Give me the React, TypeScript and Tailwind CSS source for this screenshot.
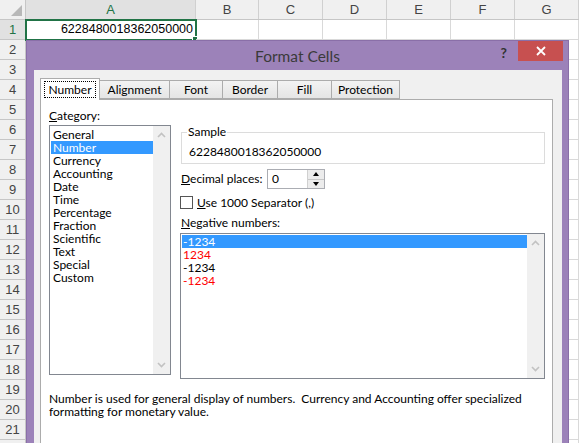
import React from 'react';

const cols = [
  { l: 'A', w: 'w-[170px]' },
  { l: 'B', w: 'w-[63px]' },
  { l: 'C', w: 'w-[64px]' },
  { l: 'D', w: 'w-[64px]' },
  { l: 'E', w: 'w-[64px]' },
  { l: 'F', w: 'w-[64px]' },
  { l: 'G', w: 'w-[64px]' },
];

const rows = Array.from({ length: 22 }, (_, i) => i + 1);

const categories = [
  'General', 'Number', 'Currency', 'Accounting', 'Date', 'Time',
  'Percentage', 'Fraction', 'Scientific', 'Text', 'Special', 'Custom',
];

const negatives = [
  { t: '-1234', c: 'text-white bg-[#3399ff]' },
  { t: '1234', c: 'text-[#ff0000]' },
  { t: '-1234', c: 'text-black' },
  { t: '-1234', c: 'text-[#ff0000]' },
];

const tabs = [
  { t: 'Alignment', w: 'w-[70px]' },
  { t: 'Font', w: 'w-[53px]' },
  { t: 'Border', w: 'w-[55px]' },
  { t: 'Fill', w: 'w-[54px]' },
  { t: 'Protection', w: 'w-[68px]' },
];

const Chevron = ({ down }: { down?: boolean }) => (
  <svg width="9" height="6" viewBox="0 0 9 6">
    <polyline
      points={down ? '1,1 4.5,4.5 8,1' : '1,5 4.5,1.5 8,5'}
      fill="none"
      stroke="#c2c2c2"
      strokeWidth="1.6"
    />
  </svg>
);

const Scrollbar = () => (
  <div className="w-[17px] shrink-0 bg-[#f0f0f0] flex flex-col items-center justify-between py-[6px]">
    <Chevron />
    <Chevron down />
  </div>
);

export default function App() {
  return (
    <div className="relative w-[579px] h-[443px] overflow-hidden bg-white font-['Liberation_Sans',sans-serif]">
      {/* column headers */}
      <div className="flex h-[20px] bg-[#f0f0f0] border-b border-[#c6c6c6]">
        <div className="w-[26px] shrink-0 border-r border-[#c6c6c6] flex items-end justify-end p-[3px]">
          <div className="w-0 h-0 border-l-[11px] border-l-transparent border-b-[11px] border-b-[#b8b8b8]" />
        </div>
        {cols.map((c) => (
          <div
            key={c.l}
            className={`${c.w} shrink-0 border-r border-[#d0d0d0] flex items-center justify-center text-[13px] ${
              c.l === 'A' ? 'bg-[#e1e1e1] text-[#217346]' : 'text-[#444]'
            }`}
          >
            {c.l}
          </div>
        ))}
      </div>

      {/* rows */}
      {rows.map((r) => (
        <div key={r} className="flex h-[20px]">
          <div
            className={`w-[26px] shrink-0 border-r border-b border-[#c6c6c6] flex items-center justify-center text-[13px] ${
              r === 1 ? 'bg-[#e1e1e1] text-[#217346]' : 'bg-[#f0f0f0] text-[#444]'
            }`}
          >
            {r}
          </div>
          {cols.map((c) => (
            <div key={c.l} className={`${c.w} shrink-0 border-r border-b border-[#d9d9d9] relative`}>
              {r === 1 && c.l === 'A' && (
                <>
                  <div className="h-full flex items-center justify-end pr-[2px] text-[12.5px] text-black">
                    6228480018362050000
                  </div>
                  <div className="absolute -left-[1px] -top-[1px] w-[172px] h-[22px] border-2 border-[#217346]" />
                  <div className="absolute -right-[3px] -bottom-[3px] w-[6px] h-[6px] bg-[#217346] border border-white" />
                </>
              )}
            </div>
          ))}
        </div>
      ))}

      {/* Format Cells dialog */}
      <div className="absolute left-[26px] top-[40px] w-[543px] h-[420px] bg-[#9c82b9] border border-[#8a6fa8] flex flex-col font-['Lato',sans-serif] text-[12px] text-black">
        <div className="h-[29px] shrink-0 grid grid-cols-[1fr_auto_1fr]">
          <div />
          <div className="pt-[4px] text-[15.5px] text-[#3a3a3a]">Format Cells</div>
          <div className="flex justify-end items-start pr-[5px]">
            <span className="mt-[1px] mr-[11px] font-bold text-[14px] text-[#333]">?</span>
            <div className="w-[45px] h-[20px] bg-[#c75050] flex items-center justify-center">
              <svg width="10" height="10" viewBox="0 0 10 10">
                <path d="M1 1 L9 9 M9 1 L1 9" stroke="white" strokeWidth="1.8" />
              </svg>
            </div>
          </div>
        </div>

        <div className="flex-1 ml-[7px] mr-[6px] bg-[#f0f0f0] pt-[8px] pl-[6px] pr-[9px] flex flex-col">
          {/* tabs */}
          <div className="flex items-end h-[21px]">
            <div className="w-[60px] h-[22px] bg-white border border-b-0 border-[#acacac] -mb-[1px] z-10 flex items-center justify-center px-[3px] py-[2px]">
              <div className="w-full h-full border border-dotted border-black flex items-center justify-center">
                Number
              </div>
            </div>
            {tabs.map((t) => (
              <div
                key={t.t}
                className={`${t.w} h-[19px] bg-linear-to-b from-[#f3f3f3] to-[#e5e5e5] border border-l-0 border-[#acacac] flex items-center justify-center`}
              >
                {t.t}
              </div>
            ))}
          </div>

          {/* tab panel */}
          <div className="flex-1 bg-white border border-[#acacac] pt-[8px] pl-[8px] flex flex-col">
            <div className="flex">
              {/* category */}
              <div className="w-[122px] shrink-0 flex flex-col">
                <div className="h-[16px] leading-[16px] mb-[1px]">
                  <span className="underline">C</span>ategory:
                </div>
                <div className="h-[250px] border border-[#828790] flex">
                  <div className="flex-1 pt-[2px] pl-[1px]">
                    {categories.map((c) => (
                      <div
                        key={c}
                        className={`h-[13px] leading-[13px] pl-[2px] ${
                          c === 'Number' ? 'bg-[#3399ff] text-white' : ''
                        }`}
                      >
                        {c}
                      </div>
                    ))}
                  </div>
                  <Scrollbar />
                </div>
              </div>

              {/* right side */}
              <div className="w-[365px] ml-[9px] flex flex-col">
                <div className="relative mt-[24px] ml-[1px] h-[32px] border border-[#dcdcdc] pt-[12px] pl-[7px] leading-[13px]">
                  <span className="absolute -top-[9px] left-[5px] bg-white px-[1px] leading-[16px]">Sample</span>
                  6228480018362050000
                </div>

                <div className="flex items-center mt-[5px] ml-[1px]">
                  <div className="w-[86px] whitespace-nowrap">
                    <span className="underline">D</span>ecimal places:
                  </div>
                  <div className="w-[58px] h-[20px] border border-[#abadb3] flex">
                    <div className="flex-1 pl-[4px] leading-[18px]">0</div>
                    <div className="w-[17px] flex flex-col border-l border-[#d0d0d0]">
                      <div className="flex-1 bg-[#ececec] border-b border-[#c8c8c8] flex items-center justify-center">
                        <div className="w-0 h-0 border-l-[3px] border-r-[3px] border-l-transparent border-r-transparent border-b-[4px] border-b-black" />
                      </div>
                      <div className="flex-1 bg-[#ececec] flex items-center justify-center">
                        <div className="w-0 h-0 border-l-[3px] border-r-[3px] border-l-transparent border-r-transparent border-t-[4px] border-t-black" />
                      </div>
                    </div>
                  </div>
                </div>

                <div className="flex items-center mt-[7px]">
                  <div className="w-[13px] h-[13px] border border-[#555] bg-white" />
                  <div className="ml-[4px] leading-[13px]">
                    <span className="underline">U</span>se 1000 Separator (<span className="underline">,</span>)
                  </div>
                </div>

                <div className="mt-[6px] h-[16px] leading-[16px] ml-[1px]">
                  <span className="underline">N</span>egative numbers:
                </div>

                <div className="mt-[2px] h-[146px] border border-[#828790] flex">
                  <div className="flex-1 pt-[1px] pl-[1px]">
                    {negatives.map((n, i) => (
                      <div key={i} className={`h-[13px] leading-[13px] pl-[1px] ${n.c}`}>
                        {n.t}
                      </div>
                    ))}
                  </div>
                  <Scrollbar />
                </div>
              </div>
            </div>

            <div className="mt-[13px] leading-[13px] whitespace-nowrap">
              Number is used for general display of numbers.&nbsp; Currency and Accounting offer specialized
              <br />
              formatting for monetary value.
            </div>
          </div>
        </div>
      </div>
    </div>
  );
}
